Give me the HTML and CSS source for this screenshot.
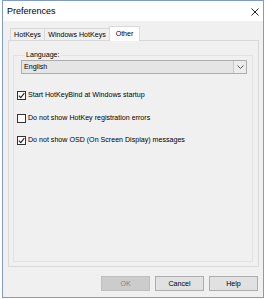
FILE: index.html
```html
<!DOCTYPE html>
<html>
<head>
<meta charset="utf-8">
<link rel="stylesheet" href="styles.css">
</head>
<body>
<div class="window">
  <div class="titlebar">
    <span class="title">Preferences</span>
    <svg class="close" width="8" height="8" viewBox="0 0 8 8"><path d="M0.5 0.5 L7.5 7.5 M7.5 0.5 L0.5 7.5" stroke="#222" stroke-width="1" fill="none"/></svg>
  </div>
  <div class="content">
    <div class="tabs">
      <div class="tab t1">HotKeys</div>
      <div class="tab t2">Windows HotKeys</div>
      <div class="tab sel">Other</div>
    </div>
    <div class="panel">
      <fieldset class="group">
        <legend>Language:</legend>
        <div class="combo">
          <span class="combo-text">English</span>
          <span class="combo-btn"><svg width="7" height="4" viewBox="0 0 7 4"><path d="M0.5 0.5 L3.5 3.5 L6.5 0.5" stroke="#555" stroke-width="1" fill="none"/></svg></span>
        </div>
        <div class="check r1"><span class="box"><svg width="7" height="7" viewBox="0 0 7 7"><path d="M0.8 3.6 L2.8 5.6 L6.3 1.2" stroke="#222" stroke-width="1.1" fill="none"/></svg></span><span>Start HotKeyBind at Windows startup</span></div>
        <div class="check r2"><span class="box"></span><span>Do not show HotKey registration errors</span></div>
        <div class="check r3"><span class="box"><svg width="7" height="7" viewBox="0 0 7 7"><path d="M0.8 3.6 L2.8 5.6 L6.3 1.2" stroke="#222" stroke-width="1.1" fill="none"/></svg></span><span>Do not show OSD (On Screen Display) messages</span></div>
      </fieldset>
    </div>
    <div class="footer">
      <div class="btn disabled">OK</div>
      <div class="btn">Cancel</div>
      <div class="btn">Help</div>
    </div>
  </div>
</div>
</body>
</html>
```
FILE: styles.css
```css
html, body {
  margin: 0;
  padding: 0;
  background: #ffffff;
}
body {
  width: 266px;
  height: 299px;
  overflow: hidden;
  font-family: "Liberation Sans", Arial, sans-serif;
  font-size: 7.1px;
  color: #000;
}
.window {
  box-sizing: border-box;
  width: 262px;
  height: 298px;
  margin-left: 2px;
  border: 1px solid #7f9cc9;
  display: flex;
  flex-direction: column;
}
.titlebar {
  height: 20px;
  background: #fff;
  display: flex;
  align-items: center;
  justify-content: space-between;
  padding: 0 4px 0 4px;
}
.title {
  font-size: 9px;
  line-height: 10px;
}
.close {
  display: block;
  margin-top: 1px;
}
.content {
  flex: 1;
  background: #f0f0f0;
  padding: 5px 4px 0 5px;
  display: flex;
  flex-direction: column;
}
.tabs {
  height: 14px;
  display: flex;
  align-items: flex-end;
  padding-left: 2px;
  position: relative;
  z-index: 1;
}
.tab {
  box-sizing: border-box;
  height: 12px;
  border: 1px solid #d9d9d9;
  border-bottom: none;
  border-right: none;
  background: #f0f0f0;
  display: flex;
  align-items: center;
  justify-content: center;
  line-height: 8px;
}
.t1 { width: 34px; }
.t2 { width: 65px; }
.tab.sel {
  width: 31px;
  height: 15px;
  margin-bottom: -1px;
  background: #fff;
  border-right: 1px solid #d9d9d9;
  padding-bottom: 1px;
}
.panel {
  box-sizing: border-box;
  height: 227px;
  border: 1px solid #d9d9d9;
  background: #f0f0f0;
  display: flex;
  flex-direction: column;
}
.group {
  flex: 1;
  margin: 10px 5px 4px 4px;
  border: 1px solid #e2e2e2;
  padding: 1px 5px 0 3px;
  min-width: 0;
}
.group legend {
  padding: 0 1px;
  margin-left: 8px;
  line-height: 8px;
}
.combo {
  box-sizing: border-box;
  height: 14px;
  margin-left: 4px;
  border: 1px solid #adadad;
  background: #e5e5e5;
  display: flex;
  align-items: center;
  justify-content: space-between;
  padding-left: 2px;
}
.combo-btn {
  box-sizing: border-box;
  width: 13px;
  height: 12px;
  border-left: 1px solid #c8c8c8;
  display: flex;
  align-items: center;
  justify-content: center;
  background: #ececec;
}
.combo-btn svg { display: block; }
.check {
  display: flex;
  align-items: center;
  gap: 2px;
  height: 10px;
  line-height: 8px;
}
.r1 { margin-top: 16px; }
.r2 { margin-top: 13px; }
.r3 { margin-top: 12px; }
.box {
  box-sizing: border-box;
  width: 9px;
  height: 9px;
  border: 1px solid #333;
  background: #fff;
  display: flex;
  align-items: center;
  justify-content: center;
}
.box svg { display: block; }
.footer {
  display: flex;
  justify-content: flex-end;
  gap: 5px;
  margin-top: 9px;
  padding-right: 1px;
}
.btn {
  box-sizing: border-box;
  width: 49px;
  height: 15px;
  border: 1px solid #adadad;
  background: #e1e1e1;
  display: flex;
  align-items: center;
  justify-content: center;
  line-height: 8px;
}
.btn.disabled {
  background: #cccccc;
  border-color: #bfbfbf;
  color: #838383;
}
```
